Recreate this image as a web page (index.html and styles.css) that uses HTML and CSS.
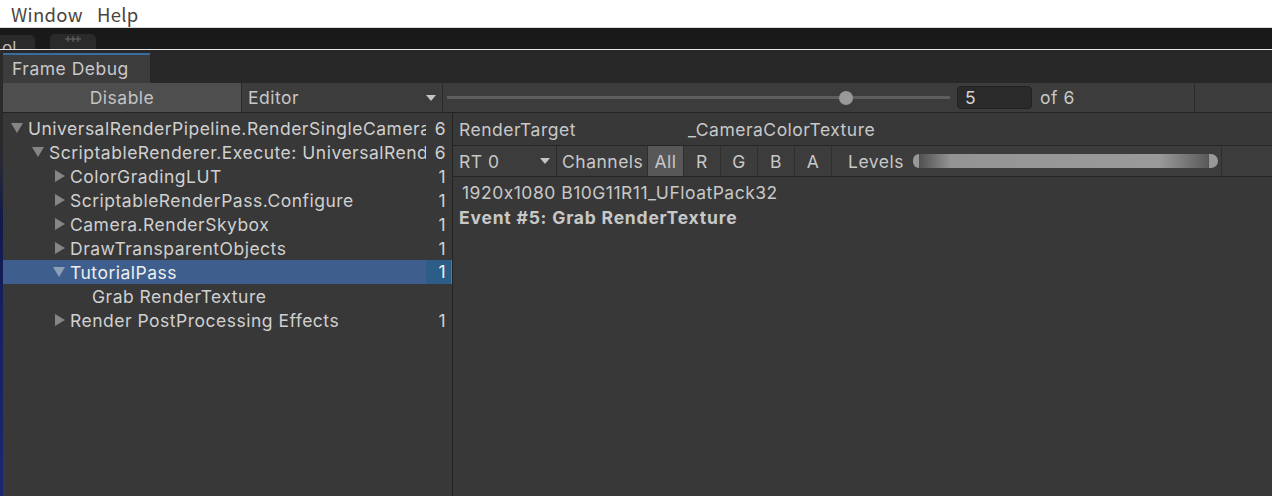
FILE: index.html
```html
<!DOCTYPE html>
<html lang="en">
<head>
    <meta charset="UTF-8">
    <title>Frame Debug</title>
    <link rel="stylesheet" href="styles.css">
</head>
<body>

    <div class="menubar">
        <span>Window</span>
        <span>Help</span>
    </div>

    <div class="docktabs">
        <div class="docktab first">ol</div>
        <div class="docktab second">
            <svg width="18" height="10" viewBox="0 0 18 10">
                <path d="M1 4H17M4 1V7M9 1V7M14 1V7" stroke="#6a6a6a" stroke-width="1" fill="none"/>
            </svg>
        </div>
    </div>

    <div class="editor">
        <div class="sidebar-strip"></div>
        <div class="window">
            <div class="tabbar">
                <div class="tab">Frame Debug</div>
            </div>

            <div class="toolbar">
                <button class="btn-disable">Disable</button>
                <div class="dropdown editor-select">
                    <span>Editor</span>
                    <span class="arrow"></span>
                </div>
                <div class="slider">
                    <div class="track"></div>
                    <div class="thumb"></div>
                </div>
                <div class="num-field">5</div>
                <span class="of-label">of 6</span>
                <div class="toolbar-end"></div>
            </div>

            <div class="main">
                <div class="tree">
                    <div class="row lvl0"><span class="tri down"></span><span class="name">UniversalRenderPipeline.RenderSingleCamera</span><span class="count">6</span></div>
                    <div class="row lvl1"><span class="tri down"></span><span class="name">ScriptableRenderer.Execute: UniversalRenderer</span><span class="count">6</span></div>
                    <div class="row lvl2"><span class="tri right"></span><span class="name">ColorGradingLUT</span><span class="count">1</span></div>
                    <div class="row lvl2"><span class="tri right"></span><span class="name">ScriptableRenderPass.Configure</span><span class="count">1</span></div>
                    <div class="row lvl2"><span class="tri right"></span><span class="name">Camera.RenderSkybox</span><span class="count">1</span></div>
                    <div class="row lvl2"><span class="tri right"></span><span class="name">DrawTransparentObjects</span><span class="count">1</span></div>
                    <div class="row lvl2 selected"><span class="tri down"></span><span class="name">TutorialPass</span><span class="count">1</span></div>
                    <div class="row lvl3"><span class="tri none"></span><span class="name">Grab RenderTexture</span><span class="count"></span></div>
                    <div class="row lvl2"><span class="tri right"></span><span class="name">Render PostProcessing Effects</span><span class="count">1</span></div>
                </div>

                <div class="details">
                    <div class="target-row">
                        <span class="target-label">RenderTarget</span>
                        <span>_CameraColorTexture</span>
                    </div>
                    <div class="channel-bar">
                        <div class="dropdown rt-select">
                            <span>RT 0</span>
                            <span class="arrow"></span>
                        </div>
                        <span class="channels-label">Channels</span>
                        <div class="ch active">All</div>
                        <div class="ch">R</div>
                        <div class="ch">G</div>
                        <div class="ch">B</div>
                        <div class="ch last">A</div>
                        <span class="levels-label">Levels</span>
                        <div class="levels">
                            <span class="cap left"></span>
                            <span class="ramp"></span>
                            <span class="cap right"></span>
                        </div>
                        <div class="channel-end"></div>
                    </div>
                    <div class="info">
                        <div class="format">1920x1080 B10G11R11_UFloatPack32</div>
                        <div class="event">Event #5: Grab RenderTexture</div>
                    </div>
                </div>
            </div>
        </div>
    </div>

</body>
</html>
```

FILE: styles.css
```css
body {
    margin: 0;
    width: 1272px;
    height: 496px;
    overflow: hidden;
    background: #191919;
    font-family: Inter, "Noto Sans", sans-serif;
    font-feature-settings: "calt" 0;
}

/* OS menu bar */
.menubar {
    height: 27px;
    background: #ffffff;
    border-bottom: 1px solid #dadada;
    display: flex;
    align-items: center;
    gap: 14px;
    padding-left: 11px;
    font-family: "Noto Sans CJK SC", "Noto Sans", sans-serif;
    font-size: 18.5px;
    letter-spacing: 0.3px;
    color: #4a4440;
}

/* dock tabs behind the window */
.docktabs {
    height: 21px;
    background: #191919;
    display: flex;
    align-items: flex-end;
    border-bottom: 1px solid #e8e8e8;
}
.docktab {
    height: 14px;
    background: #2a2a2a;
    border-radius: 5px 5px 0 0;
    overflow: hidden;
}
.docktab.first {
    width: 35px;
    margin-right: 15px;
    padding-left: 2px;
    box-sizing: border-box;
    color: #bdbdbd;
    font-size: 17px;
    line-height: 26px;
    border-radius: 0 5px 0 0;
}
.docktab.second {
    width: 46px;
    display: flex;
    justify-content: center;
    padding-top: 1px;
}

.editor {
    display: flex;
    height: 446px;
}
.sidebar-strip {
    width: 3px;
    flex: none;
    background: linear-gradient(#2a2a2a 0, #2a2a2a 90px, #262838 120px, #101a4a 170px, #142060 260px, #1b2770 446px);
}
.window {
    flex: 1;
    display: flex;
    flex-direction: column;
    background: #383838;
    color: #c8c8c8;
    font-size: 17.5px;
    letter-spacing: 0.5px;
}

.tabbar {
    height: 33px;
    background: #282828;
    display: flex;
    align-items: flex-end;
}
.tab {
    width: 147px;
    height: 30px;
    box-sizing: border-box;
    background: #3c3c3c;
    border-top: 2px solid #3a6d9f;
    padding-left: 9px;
    line-height: 27px;
    color: #c8c8c8;
}

/* top toolbar */
.toolbar {
    height: 30px;
    background: #3c3c3c;
    border-bottom: 1px solid #232323;
    display: flex;
    align-items: center;
    box-sizing: border-box;
}
.btn-disable {
    width: 239px;
    height: 29px;
    align-self: flex-start;
    margin: 0;
    border: none;
    border-right: 1px solid #2a2a2a;
    background: #4e4e4e;
    color: #c4c4c4;
    font-family: inherit;
    font-size: inherit;
    letter-spacing: inherit;
}
.dropdown {
    display: flex;
    align-items: center;
    justify-content: space-between;
    height: 100%;
    box-sizing: border-box;
    border-right: 1px solid #2a2a2a;
}
.editor-select {
    width: 201px;
    padding: 0 6px 0 6px;
    height: 29px;
    align-self: flex-start;
}
.arrow {
    width: 0;
    height: 0;
    border-left: 5px solid transparent;
    border-right: 5px solid transparent;
    border-top: 6px solid #c4c4c4;
}
.slider {
    position: relative;
    width: 503px;
    height: 16px;
    margin-left: 4px;
}
.track {
    position: absolute;
    left: 0;
    right: 0;
    top: 6px;
    height: 3px;
    background: #5e5e5e;
}
.thumb {
    position: absolute;
    left: 392px;
    top: 1px;
    width: 14px;
    height: 14px;
    border-radius: 50%;
    background: #999999;
}
.num-field {
    width: 75px;
    height: 23px;
    margin-left: 7px;
    box-sizing: border-box;
    background: #2a2a2a;
    border: 1px solid #212121;
    border-radius: 4px;
    padding-left: 7px;
    line-height: 21px;
    color: #d2d2d2;
}
.of-label {
    margin-left: 8px;
    width: 154px;
}
.toolbar-end {
    height: 29px;
    align-self: flex-start;
    flex: 1;
    border-left: 1px solid #2a2a2a;
}

/* main split */
.main {
    flex: 1;
    display: flex;
    min-height: 0;
}
.tree {
    width: 449px;
    flex: none;
    padding-top: 3px;
    border-right: 1px solid #232323;
}
.row {
    height: 24px;
    display: flex;
    align-items: center;
    color: #d0d0d0;
}
.row .name {
    flex: 1;
    white-space: nowrap;
    overflow: hidden;
}
.row .count {
    width: 20px;
    text-align: right;
    padding-right: 6px;
    flex: none;
}
.lvl0 { padding-left: 6px; }
.lvl1 { padding-left: 27px; }
.lvl2 { padding-left: 48px; }
.lvl3 { padding-left: 69px; }
.tri {
    width: 19px;
    flex: none;
    display: inline-flex;
}
.tri.down::before {
    content: "";
    margin-left: 2px;
    border-left: 6px solid transparent;
    border-right: 6px solid transparent;
    border-top: 10px solid #858585;
}
.tri.right::before {
    content: "";
    margin-left: 4px;
    border-top: 6px solid transparent;
    border-bottom: 6px solid transparent;
    border-left: 10px solid #858585;
}
.tri.none { width: 20px; }
.row.selected {
    background: #3e5f8e;
    color: #eeeeee;
}
.row.selected .count {
    background: #2c5d87;
    height: 24px;
    line-height: 24px;
    box-shadow: inset -1px 0 #3f7ac0;
}
.row.selected .tri.down::before {
    border-top-color: #8e9fb8;
}

/* details on the right */
.details {
    flex: 1;
    display: flex;
    flex-direction: column;
}
.target-row {
    height: 33px;
    display: flex;
    align-items: center;
    padding-left: 6px;
    border-bottom: 1px solid #262626;
    box-sizing: border-box;
}
.target-label {
    width: 229px;
}
.channel-bar {
    height: 31px;
    background: #3c3c3c;
    display: flex;
    align-items: center;
    border-bottom: 1px solid #262626;
    box-sizing: border-box;
}
.rt-select {
    width: 104px;
    padding: 0 6px;
}
.channels-label {
    padding-left: 5px;
    width: 90px;
    box-sizing: border-box;
    white-space: nowrap;
}
.ch {
    width: 37px;
    height: 100%;
    display: flex;
    align-items: center;
    justify-content: center;
    border-left: 1px solid #2e2e2e;
    box-sizing: border-box;
}
.ch.active {
    width: 36px;
    background: #585858;
}
.ch.last {
    width: 38px;
    border-right: 1px solid #2e2e2e;
}
.levels-label {
    margin-left: 16px;
    width: 65px;
}
.levels {
    display: flex;
    align-items: center;
    height: 14px;
}
.cap {
    width: 6px;
    height: 14px;
    background: #989898;
}
.cap.left { border-radius: 7px 0 0 7px; }
.cap.right {
    width: 10px;
    box-sizing: border-box;
    border-radius: 0 7px 7px 0;
    border-left: 1px solid #555555;
}
.ramp {
    width: 289px;
    height: 14px;
    background: linear-gradient(90deg, #505050 0, #949494 32px, #9a9a9a 240px, #5a5a5a 100%);
}
.channel-end {
    flex: 1;
    height: 100%;
    margin-left: 3px;
    border-left: 1px solid #2e2e2e;
}
.info {
    padding: 3px 0 0 6px;
}
.format {
    padding-left: 3px;
    height: 25px;
    line-height: 26px;
}
.event {
    font-weight: bold;
    letter-spacing: 0.8px;
    line-height: 26px;
}
```
